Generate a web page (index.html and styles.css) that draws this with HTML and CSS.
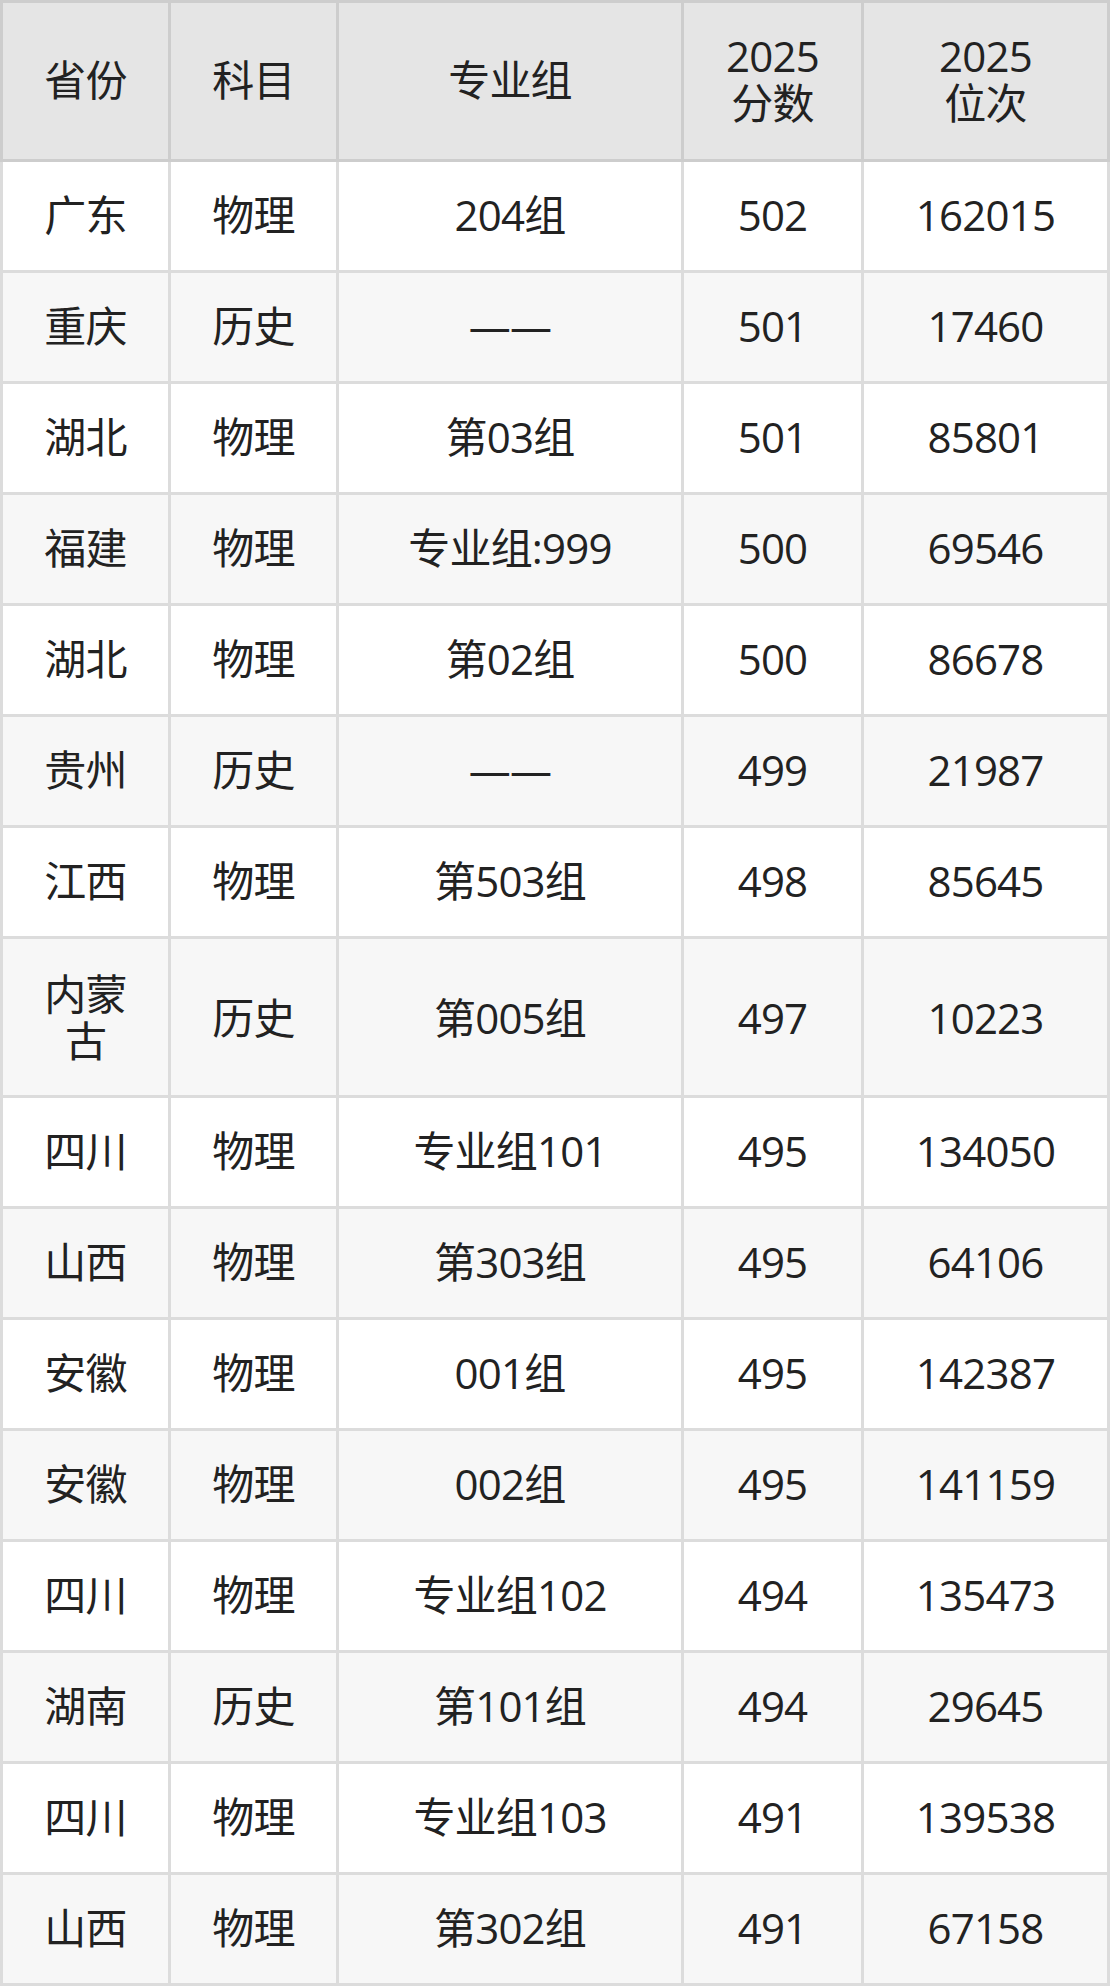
FILE: index.html
```html
<!DOCTYPE html>
<html lang="zh-CN">
<head>
<meta charset="utf-8">
<title>2025 分数位次</title>
<link rel="stylesheet" href="styles.css">
</head>
<body>
<div class="table">
  <div class="head">
    <div class="cell">省份</div>
    <div class="cell">科目</div>
    <div class="cell">专业组</div>
    <div class="cell">2025<br>分数</div>
    <div class="cell">2025<br>位次</div>
  </div>
  <div class="body">
    <div class="cell">广东</div><div class="cell">物理</div><div class="cell">204组</div><div class="cell">502</div><div class="cell">162015</div>
    <div class="cell alt">重庆</div><div class="cell alt">历史</div><div class="cell alt">——</div><div class="cell alt">501</div><div class="cell alt">17460</div>
    <div class="cell">湖北</div><div class="cell">物理</div><div class="cell">第03组</div><div class="cell">501</div><div class="cell">85801</div>
    <div class="cell alt">福建</div><div class="cell alt">物理</div><div class="cell alt">专业组:999</div><div class="cell alt">500</div><div class="cell alt">69546</div>
    <div class="cell">湖北</div><div class="cell">物理</div><div class="cell">第02组</div><div class="cell">500</div><div class="cell">86678</div>
    <div class="cell alt">贵州</div><div class="cell alt">历史</div><div class="cell alt">——</div><div class="cell alt">499</div><div class="cell alt">21987</div>
    <div class="cell">江西</div><div class="cell">物理</div><div class="cell">第503组</div><div class="cell">498</div><div class="cell">85645</div>
    <div class="cell alt tall">内蒙古</div><div class="cell alt tall">历史</div><div class="cell alt tall">第005组</div><div class="cell alt tall">497</div><div class="cell alt tall">10223</div>
    <div class="cell">四川</div><div class="cell">物理</div><div class="cell">专业组101</div><div class="cell">495</div><div class="cell">134050</div>
    <div class="cell alt">山西</div><div class="cell alt">物理</div><div class="cell alt">第303组</div><div class="cell alt">495</div><div class="cell alt">64106</div>
    <div class="cell">安徽</div><div class="cell">物理</div><div class="cell">001组</div><div class="cell">495</div><div class="cell">142387</div>
    <div class="cell alt">安徽</div><div class="cell alt">物理</div><div class="cell alt">002组</div><div class="cell alt">495</div><div class="cell alt">141159</div>
    <div class="cell">四川</div><div class="cell">物理</div><div class="cell">专业组102</div><div class="cell">494</div><div class="cell">135473</div>
    <div class="cell alt">湖南</div><div class="cell alt">历史</div><div class="cell alt">第101组</div><div class="cell alt">494</div><div class="cell alt">29645</div>
    <div class="cell">四川</div><div class="cell">物理</div><div class="cell">专业组103</div><div class="cell">491</div><div class="cell">139538</div>
    <div class="cell alt">山西</div><div class="cell alt">物理</div><div class="cell alt">第302组</div><div class="cell alt">491</div><div class="cell alt">67158</div>
  </div>
</div>
</body>
</html>
```

FILE: styles.css
```css
html, body {
  margin: 0;
  padding: 0;
  background: #ffffff;
}

body {
  font-family: "Open Sans", "Noto Sans CJK SC", sans-serif;
  font-size: 42px;
  line-height: 47px;
  letter-spacing: -0.8px;
  color: #222222;
}

.table {
  width: 1110px;
  overflow: hidden;
}

.head,
.body {
  display: grid;
  grid-template-columns: 165px 165px 342px 177px 243px;
  column-gap: 3px;
}

.head {
  background: #cdcdcd;
  padding: 3px;
  grid-auto-rows: 156px;
}

.body {
  background: #dcdcdc;
  padding: 0 3px 3px;
  row-gap: 3px;
  grid-auto-rows: minmax(108px, auto);
}

.cell {
  display: flex;
  align-items: center;
  justify-content: center;
  text-align: center;
  padding: 0 22px 4px;
  background: #ffffff;
  min-width: 0;
}

.head .cell {
  background: #e5e5e5;
}

.cell.alt {
  background: #f7f7f7;
}

.cell.tall {
  height: 156px;
  padding-bottom: 0;
}
```
